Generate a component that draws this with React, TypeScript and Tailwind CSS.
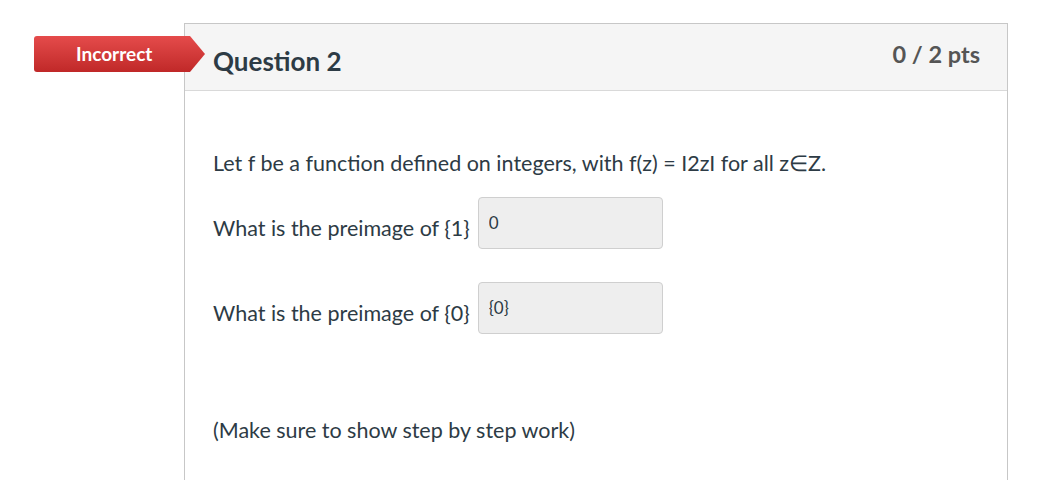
export default function App() {
  return (
    <main
      className="relative h-[480px] w-[1048px] overflow-hidden bg-white text-[#2d3b45]"
      style={{ fontFamily: "Lato, 'Liberation Sans', sans-serif" }}
    >
      <div
        className="absolute left-[34px] top-[36px] z-10 flex h-[36px] w-[171px] items-center rounded-l-[3px] bg-gradient-to-b from-[#e54b4b] to-[#c02828] pl-[42px] text-[19px] font-bold text-white"
        style={{ clipPath: "polygon(0 0, 156px 0, 171px 50%, 156px 100%, 0 100%)" }}
      >
        Incorrect
      </div>

      <div className="ml-[184px] mt-[23px] w-[824px] border-x border-t border-[#c7c7c7]">
        <div className="flex h-[67px] items-center justify-between border-b border-[#d9d9d9] bg-[#f5f5f5] pl-[28px] pr-[27px]">
          <h2 className="mt-[8px] text-[26px] font-bold text-[#2d3b45]">Question 2</h2>
          <div className="mt-[-4px] text-[23.5px] font-bold text-[#555555]">0 / 2 pts</div>
        </div>

        <div className="h-[400px] pl-[28px] text-[21.5px] leading-[28px]">
          <p className="mt-[58px]">
            Let f be a function defined on integers, with f(z) = I2zI for all z∈Z.
          </p>

          <div className="mt-[20px] flex items-start">
            <span className="mt-[17px]">What is the preimage of {"{1}"}</span>
            <input
              readOnly
              value="0"
              className="ml-[8px] h-[52px] w-[185px] rounded-[4px] border border-[#cfcfcf] bg-[#eeeeee] px-[10px] pb-[2px] text-[17px] text-[#2d3b45] outline-none"
            />
          </div>

          <div className="mt-[33px] flex items-start">
            <span className="mt-[17px]">What is the preimage of {"{0}"}</span>
            <input
              readOnly
              value="{0}"
              className="ml-[8px] h-[52px] w-[185px] rounded-[4px] border border-[#cfcfcf] bg-[#eeeeee] px-[10px] pb-[2px] text-[17px] text-[#2d3b45] outline-none"
            />
          </div>

          <p className="mt-[82px]">(Make sure to show step by step work)</p>
        </div>
      </div>
    </main>
  );
}
